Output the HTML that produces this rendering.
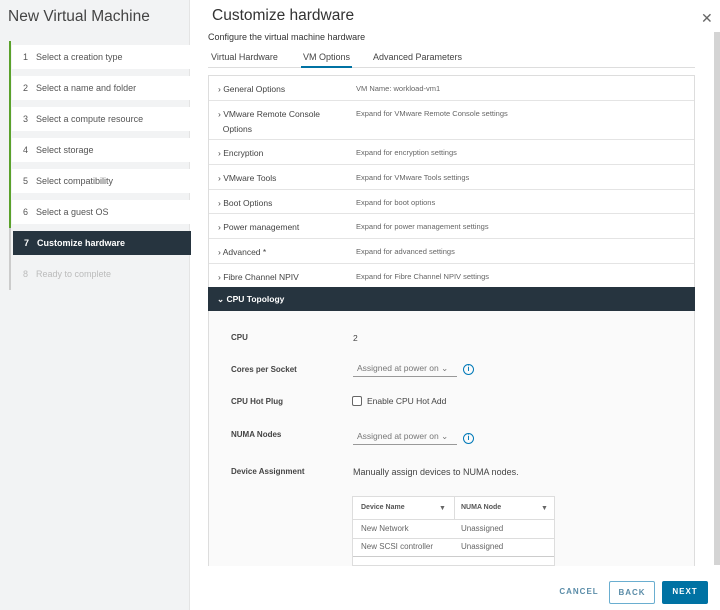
<!DOCTYPE html>
<html><head><style>
*{box-sizing:border-box;margin:0;padding:0}
body{width:720px;height:610px;overflow:hidden;font-family:"Liberation Sans",sans-serif;background:#fff;position:relative;color:#333}
.side{position:absolute;left:0;top:0;width:190px;height:610px;background:#f2f3f4;border-right:1px solid #e4e4e4}
.side h1{position:absolute;left:8px;top:8px;font-size:15.5px;font-weight:normal;color:#444}
.gbar{position:absolute;left:9px;top:41px;width:2px;height:187px;background:#5aa12b}
.gbar2{position:absolute;left:9px;top:228px;width:2px;height:62px;background:#ccc}
.step{position:absolute;left:12px;width:178px;height:24px;background:#fff;font-size:9px;color:#555;line-height:24px;padding-left:11px}
.step b{font-weight:normal;margin-right:8px}
.step.act{background:#26343f;color:#fff;font-weight:bold;left:13px}
.step.dis{background:none;color:#bbb}
.main h2{position:absolute;left:212px;top:7px;font-size:15.5px;font-weight:normal;color:#333}
.sub{position:absolute;left:208px;top:32px;font-size:9px;color:#333}
.tabs{position:absolute;left:208px;top:50px;width:487px;height:18px;border-bottom:1px solid #ddd;font-size:9px;color:#444}
.tabs span{position:absolute;top:2px}
.tabs .on{border-bottom:2px solid #0072a3;height:16px}
.close{position:absolute;left:701px;top:10px;font-size:14px;color:#666}
.tbl{position:absolute;left:208px;top:75px;width:487px;border:1px solid #ddd;border-bottom:none}
.row{border-bottom:1px solid #e4e4e4;font-size:8.5px;position:relative}
.row .l{position:absolute;left:9px;top:6px;color:#444;line-height:15px;width:130px}
.row .r{position:absolute;left:147px;top:8px;font-size:7.5px;color:#666}
.cpu{position:absolute;left:208px;top:287px;width:487px;height:24px;background:#26343f;color:#fff;font-size:8.5px;font-weight:bold;line-height:24px;padding-left:9px}
.body{position:absolute;left:208px;top:311px;width:487px;height:255px;background:#fafafa;border-left:1px solid #ddd;border-right:1px solid #ddd}
.lab{position:absolute;left:231px;font-size:8px;font-weight:bold;color:#444}
.val{position:absolute;left:353px;font-size:8.5px;color:#444}
.sel{position:absolute;left:353px;width:104px;height:14px;border-bottom:1px solid #999;font-size:8.5px;color:#777;padding-left:4px}
.info{position:absolute;left:463px;width:11px;height:11px;border:1.3px solid #0079b8;border-radius:50%;color:#0079b8;font-size:7px;text-align:center;line-height:9px;font-weight:bold}
.dt{position:absolute;left:352px;top:496px;width:203px;height:70px;border:1px solid #ddd;background:#fff;font-size:8px;color:#666}
.dt div{position:absolute;height:18px;line-height:18px}
.scroll{position:absolute;left:714px;top:32px;width:6px;height:533px;background:#d4d4d4}
.btn{position:absolute;top:581px;height:23px;font-size:8px;font-weight:bold;letter-spacing:1px;line-height:21px;text-align:center;border-radius:2px}
</style></head><body>
<div class="side"><h1>New Virtual Machine</h1>
<div class="gbar"></div><div class="gbar2"></div>
<div class="step" style="top:45px"><b>1</b>Select a creation type</div>
<div class="step" style="top:76px"><b>2</b>Select a name and folder</div>
<div class="step" style="top:107px"><b>3</b>Select a compute resource</div>
<div class="step" style="top:138px"><b>4</b>Select storage</div>
<div class="step" style="top:169px"><b>5</b>Select compatibility</div>
<div class="step" style="top:200px"><b>6</b>Select a guest OS</div>
<div class="step act" style="top:231px"><b style="font-weight:bold">7</b>Customize hardware</div>
<div class="step dis" style="top:262px"><b>8</b>Ready to complete</div>
</div>
<div class="main">
<h2>Customize hardware</h2>
<div class="close">✕</div>
<div class="sub">Configure the virtual machine hardware</div>
<div class="tabs"><span style="left:3px">Virtual Hardware</span><span class="on" style="left:93px;padding:0 2px">VM Options</span><span style="left:165px">Advanced Parameters</span></div>
<div class="tbl">
<div class="row" style="height:25px"><div class="l">› General Options</div><div class="r">VM Name: workload-vm1</div></div>
<div class="row" style="height:39px"><div class="l">› VMware Remote Console &nbsp;&nbsp;Options</div><div class="r">Expand for VMware Remote Console settings</div></div>
<div class="row" style="height:25px"><div class="l">› Encryption</div><div class="r">Expand for encryption settings</div></div>
<div class="row" style="height:25px"><div class="l">› VMware Tools</div><div class="r">Expand for VMware Tools settings</div></div>
<div class="row" style="height:24px"><div class="l">› Boot Options</div><div class="r">Expand for boot options</div></div>
<div class="row" style="height:25px"><div class="l">› Power management</div><div class="r">Expand for power management settings</div></div>
<div class="row" style="height:25px"><div class="l">› Advanced *</div><div class="r">Expand for advanced settings</div></div>
<div class="row" style="height:24px"><div class="l">› Fibre Channel NPIV</div><div class="r">Expand for Fibre Channel NPIV settings</div></div>
</div>
<div class="cpu">⌄ CPU Topology</div>
<div class="body"></div>
<div class="lab" style="top:333px">CPU</div><div class="val" style="top:333px">2</div>
<div class="lab" style="top:365px">Cores per Socket</div><div class="sel" style="top:363px">Assigned at power on ⌄</div><div class="info" style="top:364px">i</div>
<div class="lab" style="top:397px">CPU Hot Plug</div><div style="position:absolute;left:352px;top:396px;width:10px;height:10px;border:1px solid #666;border-radius:2px;background:#fff"></div><div class="val" style="left:367px;top:396px">Enable CPU Hot Add</div>
<div class="lab" style="top:430px">NUMA Nodes</div><div class="sel" style="top:431px">Assigned at power on ⌄</div><div class="info" style="top:433px">i</div>
<div class="lab" style="top:467px">Device Assignment</div><div class="val" style="top:467px;font-size:9px">Manually assign devices to NUMA nodes.</div>
<div class="dt">
<div style="left:0;top:0;width:201px;height:23px;border-bottom:1px solid #ddd"></div>
<div style="left:8px;top:2px;font-size:7px;font-weight:bold;color:#555">Device Name</div><div style="left:86px;top:3px;font-size:7px">▼</div>
<div style="left:101px;top:0;width:1px;height:23px;background:#ddd"></div>
<div style="left:108px;top:2px;font-size:7px;font-weight:bold;color:#555">NUMA Node</div><div style="left:188px;top:3px;font-size:7px">▼</div>
<div style="left:8px;top:23px">New Network</div><div style="left:108px;top:23px">Unassigned</div>
<div style="left:0;top:41px;width:201px;height:1px;background:#ddd"></div>
<div style="left:8px;top:41px">New SCSI controller</div><div style="left:108px;top:41px">Unassigned</div>
<div style="left:0;top:59px;width:201px;height:1px;background:#ccc"></div>
</div>
<div class="scroll"></div>
<div class="btn" style="left:555px;width:48px;color:#5a8ca8">CANCEL</div>
<div class="btn" style="left:609px;width:46px;border:1px solid #6aaed0;color:#5a8ca8">BACK</div>
<div class="btn" style="left:662px;width:46px;background:#0072a3;color:#fff">NEXT</div>
</div>
</body></html>
